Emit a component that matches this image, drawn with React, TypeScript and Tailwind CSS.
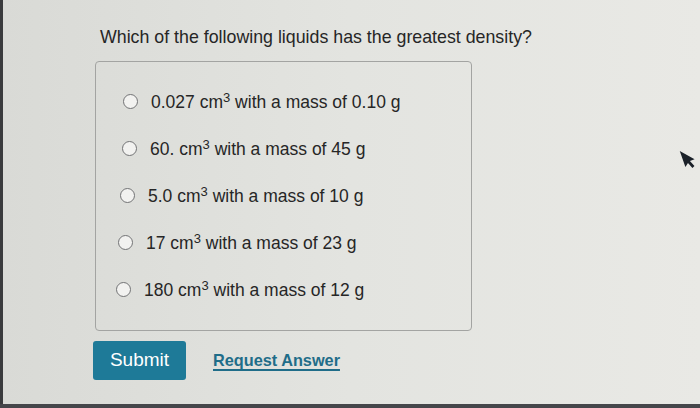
const OPTIONS = [
  { a: "0.027", b: "with a mass of 0.10 g", shift: "ml-[27px]" },
  { a: "60.", b: "with a mass of 45 g", shift: "ml-[26px]" },
  { a: "5.0", b: "with a mass of 10 g", shift: "ml-[24px]" },
  { a: "17", b: "with a mass of 23 g", shift: "ml-[22px]" },
  { a: "180", b: "with a mass of 12 g", shift: "ml-[20px]" },
];

function Cursor() {
  return (
    <svg className="absolute left-[678px] top-[146px]" width="20" height="26" viewBox="0 0 20 26">
      <path d="M4 3 L16 15 L11 15.5 L14 21.5 L11.5 22.8 L8.6 16.8 L5 20 Z" fill="#1b2129" transform="rotate(-16 10 12)" />
    </svg>
  );
}

export default function App() {
  return (
    <div className="relative h-[408px] w-[700px] overflow-hidden bg-gradient-to-r from-[#d9dad6] via-[#e3e4e0] to-[#e9e9e5] font-['Liberation_Sans',Arial,sans-serif] text-[#262626]">
      <div className="absolute inset-y-0 left-0 w-[3px] bg-[#3a3b3d]" />
      <div className="absolute inset-x-0 bottom-0 h-[4px] bg-[#45464a]" />
      <Cursor />

      <div className="pl-[100px] pt-[26px]">
        <h1 className="text-[17.8px] leading-[22px]">Which of the following liquids has the greatest density?</h1>

        <div className="ml-[-5px] mt-[13px] h-[270px] w-[377px] rounded-[4px] border border-[#a3a4a2] pt-[30px]">
          {OPTIONS.map((o) => (
            <div key={o.a} className={`flex h-[47px] items-start ${o.shift}`}>
              <span className="mt-[2px] h-[15px] w-[15px] shrink-0 rounded-full border-[1.5px] border-[#727375] bg-[#f2f2f0]" />
              <span className="ml-[13px] text-[17.5px] leading-[20px]">
                {o.a} cm<sup className="top-[-0.5em] text-[13px]">3</sup> {o.b}
              </span>
            </div>
          ))}
        </div>

        <div className="ml-[-7px] mt-[10px] flex items-center">
          <button className="h-[39px] w-[93px] rounded-[3px] bg-[#1e7a98] text-[19px] text-white">Submit</button>
          <span className="ml-[27px] text-[16.3px] font-bold text-[#1f6d89] underline decoration-[1.5px] underline-offset-[3px]">Request Answer</span>
        </div>
      </div>
    </div>
  );
}
